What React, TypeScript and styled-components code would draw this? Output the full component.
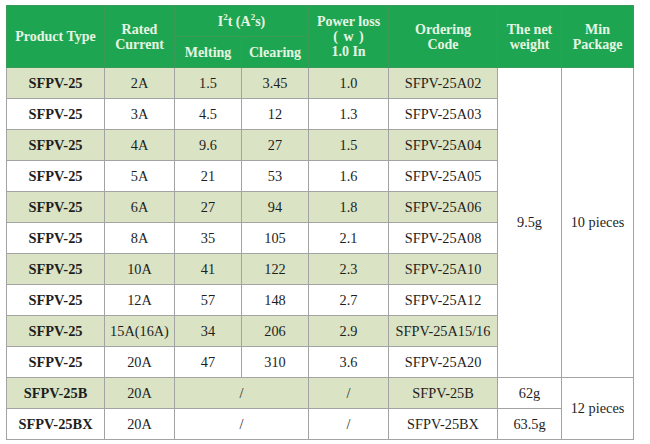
import React from "react"
import styled, { createGlobalStyle } from "styled-components"

const GlobalStyle = createGlobalStyle`
  html, body {
    margin: 0;
    padding: 0;
    background: #ffffff;
  }
  body {
    font-family: "Liberation Serif", "Times New Roman", serif;
  }
`

const Page = styled.div`
  padding: 5px 0 0 6px;
`

const Table = styled.table`
  border-collapse: collapse;
  table-layout: fixed;
  width: 627px;
  font-family: "Liberation Serif", "Times New Roman", serif;
  font-size: 14.3px;
  color: #1e1e1e;
`

const HeadCell = styled.th`
  background-color: #1ea552;
  color: #e6f5e2;
  font-weight: 700;
  font-size: 14px;
  line-height: 15px;
  text-align: center;
  vertical-align: middle;
  border: 1px solid #3a9a58;
  padding: 0 2px;
  height: 30px;
`

const Sup = styled.sup`
  font-size: 9px;
  line-height: 0;
`

const Unit = styled.span`
  display: inline-block;
  height: 15px;
  line-height: 15px;
  vertical-align: top;
  word-spacing: 2px;
`

const Cell = styled.td<{ $tint?: boolean; $bold?: boolean }>`
  background-color: ${(p) => (p.$tint ? "#dae3c4" : "#ffffff")};
  font-weight: ${(p) => (p.$bold ? 700 : 400)};
  font-size: ${(p) => (p.$bold ? "14.4px" : "14.3px")};
  text-align: center;
  vertical-align: middle;
  border: 1px solid #a3a3a3;
  height: 30px;
  padding: 0;
  white-space: nowrap;
`

type Row = {
  type: string
  current: string
  melting: string
  clearing: string
  loss: string
  code: string
}

const rows: Row[] = [
  { type: "SFPV-25", current: "2A", melting: "1.5", clearing: "3.45", loss: "1.0", code: "SFPV-25A02" },
  { type: "SFPV-25", current: "3A", melting: "4.5", clearing: "12", loss: "1.3", code: "SFPV-25A03" },
  { type: "SFPV-25", current: "4A", melting: "9.6", clearing: "27", loss: "1.5", code: "SFPV-25A04" },
  { type: "SFPV-25", current: "5A", melting: "21", clearing: "53", loss: "1.6", code: "SFPV-25A05" },
  { type: "SFPV-25", current: "6A", melting: "27", clearing: "94", loss: "1.8", code: "SFPV-25A06" },
  { type: "SFPV-25", current: "8A", melting: "35", clearing: "105", loss: "2.1", code: "SFPV-25A08" },
  { type: "SFPV-25", current: "10A", melting: "41", clearing: "122", loss: "2.3", code: "SFPV-25A10" },
  { type: "SFPV-25", current: "12A", melting: "57", clearing: "148", loss: "2.7", code: "SFPV-25A12" },
  { type: "SFPV-25", current: "15A(16A)", melting: "34", clearing: "206", loss: "2.9", code: "SFPV-25A15/16" },
  { type: "SFPV-25", current: "20A", melting: "47", clearing: "310", loss: "3.6", code: "SFPV-25A20" },
]

const widths = [98, 70, 67, 67, 80, 109, 64, 72]

export default function App() {
  return (
    <Page>
      <GlobalStyle />
      <Table>
        <colgroup>
          {widths.map((w, i) => (
            <col key={i} style={{ width: w }} />
          ))}
        </colgroup>
        <thead>
          <tr>
            <HeadCell rowSpan={2}>Product Type</HeadCell>
            <HeadCell rowSpan={2}>
              Rated
              <br />
              Current
            </HeadCell>
            <HeadCell colSpan={2}>
              I<Sup>2</Sup>t (A<Sup>2</Sup>s)
            </HeadCell>
            <HeadCell rowSpan={2}>
              Power loss
              <br />
              <Unit>( w )</Unit>
              <br />
              1.0 In
            </HeadCell>
            <HeadCell rowSpan={2}>
              Ordering
              <br />
              Code
            </HeadCell>
            <HeadCell rowSpan={2}>
              The net
              <br />
              weight
            </HeadCell>
            <HeadCell rowSpan={2}>
              Min
              <br />
              Package
            </HeadCell>
          </tr>
          <tr>
            <HeadCell>Melting</HeadCell>
            <HeadCell>Clearing</HeadCell>
          </tr>
        </thead>
        <tbody>
          {rows.map((r, i) => {
            const tint = i % 2 === 0
            return (
              <tr key={i}>
                <Cell $tint={tint} $bold>{r.type}</Cell>
                <Cell $tint={tint}>{r.current}</Cell>
                <Cell $tint={tint}>{r.melting}</Cell>
                <Cell $tint={tint}>{r.clearing}</Cell>
                <Cell $tint={tint}>{r.loss}</Cell>
                <Cell $tint={tint}>{r.code}</Cell>
                {i === 0 && (
                  <>
                    <Cell rowSpan={10}>9.5g</Cell>
                    <Cell rowSpan={10}>10 pieces</Cell>
                  </>
                )}
              </tr>
            )
          })}
          <tr>
            <Cell $tint $bold>SFPV-25B</Cell>
            <Cell $tint>20A</Cell>
            <Cell $tint colSpan={2}>/</Cell>
            <Cell $tint>/</Cell>
            <Cell $tint>SFPV-25B</Cell>
            <Cell>62g</Cell>
            <Cell rowSpan={2}>12 pieces</Cell>
          </tr>
          <tr>
            <Cell $bold>SFPV-25BX</Cell>
            <Cell>20A</Cell>
            <Cell colSpan={2}>/</Cell>
            <Cell>/</Cell>
            <Cell>SFPV-25BX</Cell>
            <Cell>63.5g</Cell>
          </tr>
        </tbody>
      </Table>
    </Page>
  )
}
